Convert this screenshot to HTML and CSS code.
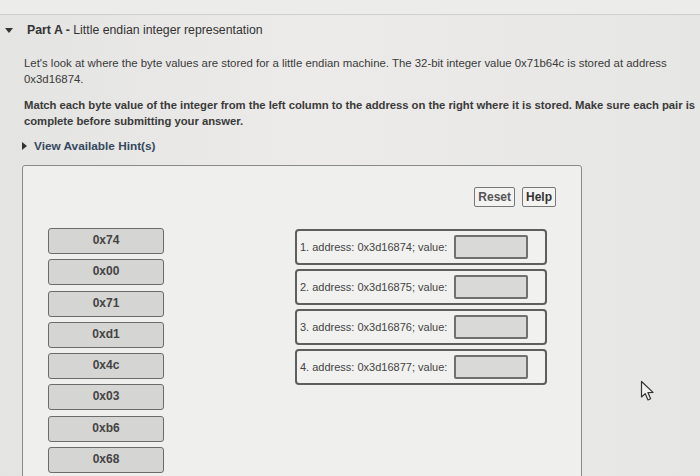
FILE: index.html
```html
<!DOCTYPE html>
<html lang="en">
<head>
<meta charset="utf-8">
<title>Part A - Little endian integer representation</title>
<link rel="stylesheet" href="styles.css">
</head>
<body>
<div class="topbar"></div>

<div class="part-head">
	<span class="caret-down"></span>
	<span class="part-title"><b>Part A -</b> Little endian integer representation</span>
</div>

<div class="part-body">
	<p class="intro">Let's look at where the byte values are stored for a little endian machine. The 32-bit integer value 0x71b64c is stored at address<br>0x3d16874.</p>
	<p class="task">Match each byte value of the integer from the left column to the address on the right where it is stored. Make sure each pair is<br>complete before submitting your answer.</p>
	<div class="hints"><span class="caret-right"></span>View Available Hint(s)</div>

	<div class="workspace">
		<div class="tools">
			<span class="btn">Reset</span>
			<span class="btn strong">Help</span>
		</div>
		<div class="columns">
			<div class="bytes">
				<div class="byte">0x74</div>
				<div class="byte">0x00</div>
				<div class="byte">0x71</div>
				<div class="byte">0xd1</div>
				<div class="byte">0x4c</div>
				<div class="byte">0x03</div>
				<div class="byte">0xb6</div>
				<div class="byte">0x68</div>
			</div>
			<div class="slots">
				<div class="slot"><span>1. address: 0x3d16874; value:</span><span class="drop"></span></div>
				<div class="slot"><span>2. address: 0x3d16875; value:</span><span class="drop"></span></div>
				<div class="slot"><span>3. address: 0x3d16876; value:</span><span class="drop"></span></div>
				<div class="slot"><span>4. address: 0x3d16877; value:</span><span class="drop"></span></div>
			</div>
		</div>
	</div>
</div>

<svg class="pointer" width="16" height="22" viewBox="0 0 16 22">
	<path d="M1.5 1.5 L1.5 17 L5.2 13.6 L8 20 L10.6 18.8 L7.9 12.6 L13 12.4 Z" fill="#f2f2f0" stroke="#333" stroke-width="1.2" stroke-linejoin="round"/>
</svg>
</body>
</html>
```

FILE: styles.css
```css
body {
	margin: 0;
	font-family: "Liberation Sans", Arial, sans-serif;
	color: #3a3a3a;
	background: linear-gradient(90deg, #e4e4e2 0%, #ecebe9 45%, #e6e6e4 100%);
	height: 476px;
	overflow: hidden;
	position: relative;
}
.topbar {
	height: 14px;
	border-bottom: 1px solid #cfcfcd;
	background: #ececea;
}
.part-head {
	display: flex;
	align-items: center;
	height: 30px;
	padding-left: 5px;
	font-size: 12.3px;
	color: #333;
}
.caret-down {
	width: 0; height: 0;
	border-left: 4px solid transparent;
	border-right: 4px solid transparent;
	border-top: 5px solid #333;
	margin-right: 14px;
}
.part-body {
	padding-left: 24px;
	font-size: 11.4px;
}
.part-body p {
	margin: 0;
	line-height: 16px;
	white-space: nowrap;
}
.intro { padding-top: 10px; }
.task { font-weight: bold; margin-top: 10px !important; font-size: 11.3px; letter-spacing: -0.03px; }
.hints {
	display: flex;
	align-items: center;
	margin-top: 10px;
	font-weight: bold;
	font-size: 11.8px;
	color: #34495e;
}
.caret-right {
	width: 0; height: 0;
	border-top: 4px solid transparent;
	border-bottom: 4px solid transparent;
	border-left: 5px solid #333;
	margin-right: 7px;
	margin-left: -2px;
}
.workspace {
	margin-top: 12px;
	margin-left: -2px;
	width: 558px;
	height: 330px;
	border: 1px solid #8a8a8a;
	border-radius: 3px;
	background: #efefed;
}
.tools {
	display: flex;
	justify-content: flex-end;
	gap: 7px;
	padding: 21px 25px 0 0;
}
.btn {
	border: 1px solid #777;
	border-radius: 2px;
	padding: 2px 3px;
	font-size: 12px;
	color: #555;
	background: #f3f3f1;
	font-weight: bold;
}
.btn.strong { color: #333; }
.columns {
	display: flex;
	gap: 131px;
	padding: 21px 0 0 25px;
}
.bytes {
	display: flex;
	flex-direction: column;
	gap: 5.3px;
}
.byte {
	width: 116px;
	height: 26px;
	line-height: 22px;
	padding-bottom: 2px;
	box-sizing: border-box;
	border: 1px solid #6b6b6b;
	border-radius: 3px;
	background: #d5d5d3;
	text-align: center;
	font-weight: bold;
	color: #444;
	font-size: 12px;
}
.slots {
	display: flex;
	flex-direction: column;
	gap: 4px;
	padding-top: 1px;
}
.slot {
	display: flex;
	align-items: center;
	justify-content: space-between;
	width: 252px;
	height: 36px;
	box-sizing: border-box;
	border: 2px solid #5e5e5e;
	border-radius: 4px;
	padding: 0 17px 0 3px;
	background: #f1f1ef;
	color: #444;
	font-size: 11px;
	white-space: nowrap;
}
.drop {
	width: 74px;
	height: 24px;
	box-sizing: border-box;
	border: 2px solid #707070;
	border-radius: 2px;
	background: #d9d9d7;
}
.pointer {
	position: absolute;
	left: 640px;
	top: 380px;
}
```
